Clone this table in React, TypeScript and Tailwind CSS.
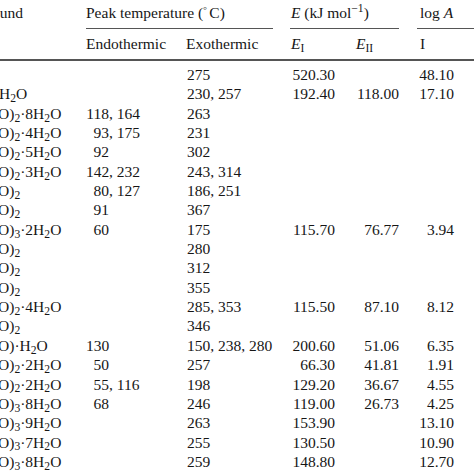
import React from 'react';

type Row = {
  compound: string;
  endo?: string;
  exo: string;
  e1?: string;
  e2?: string;
  logA?: string;
};

const ROWS: Row[] = [
  { compound: '', exo: '275', e1: '520.30', logA: '48.10' },
  { compound: 'H2O', exo: '230, 257', e1: '192.40', e2: '118.00', logA: '17.10' },
  { compound: 'O)2·8H2O', endo: '118, 164', exo: '263' },
  { compound: 'O)2·4H2O', endo: '93, 175', exo: '231' },
  { compound: 'O)2·5H2O', endo: '92', exo: '302' },
  { compound: 'O)2·3H2O', endo: '142, 232', exo: '243, 314' },
  { compound: 'O)2', endo: '80, 127', exo: '186, 251' },
  { compound: 'O)2', endo: '91', exo: '367' },
  { compound: 'O)3·2H2O', endo: '60', exo: '175', e1: '115.70', e2: '76.77', logA: '3.94' },
  { compound: 'O)2', exo: '280' },
  { compound: 'O)2', exo: '312' },
  { compound: 'O)2', exo: '355' },
  { compound: 'O)2·4H2O', exo: '285, 353', e1: '115.50', e2: '87.10', logA: '8.12' },
  { compound: 'O)2', exo: '346' },
  { compound: 'O)·H2O', endo: '130', exo: '150, 238, 280', e1: '200.60', e2: '51.06', logA: '6.35' },
  { compound: 'O)2·2H2O', endo: '50', exo: '257', e1: '66.30', e2: '41.81', logA: '1.91' },
  { compound: 'O)2·2H2O', endo: '55, 116', exo: '198', e1: '129.20', e2: '36.67', logA: '4.55' },
  { compound: 'O)3·8H2O', endo: '68', exo: '246', e1: '119.00', e2: '26.73', logA: '4.25' },
  { compound: 'O)3·9H2O', exo: '263', e1: '153.90', logA: '13.10' },
  { compound: 'O)3·7H2O', exo: '255', e1: '130.50', logA: '10.90' },
  { compound: 'O)3·8H2O', exo: '259', e1: '148.80', logA: '12.70' },
];

// digits after a letter or ")" are subscripts, the rest stay on the line
function Formula({ text }: { text: string }) {
  const parts: React.ReactNode[] = [];
  text.split('').forEach((ch, i) => {
    const prev = text[i - 1];
    if (/\d/.test(ch) && prev && /[A-Za-z)]/.test(prev)) {
      parts.push(<sub key={i}>{ch}</sub>);
    } else {
      parts.push(<span key={i}>{ch}</span>);
    }
  });
  return <>{parts}</>;
}

function Endo({ value }: { value?: string }) {
  if (!value) return null;
  const idx = value.indexOf(',');
  const first = idx === -1 ? value : value.slice(0, idx);
  const rest = idx === -1 ? '' : value.slice(idx);
  return (
    <span className="flex whitespace-pre">
      <span className="w-[23px] text-right">{first}</span>
      <span>{rest}</span>
    </span>
  );
}

const grid = 'grid grid-cols-[86px_100px_104px_45px_64px_55px_1fr]';

export default function App() {
  return (
    <div className="h-[474px] w-[474px] overflow-hidden bg-white font-['Liberation_Serif','Times_New_Roman',serif] text-[15.5px] text-[#161616]">
      <div className={`${grid} h-[28px] pt-[3px] leading-[19px]`}>
        <div className="overflow-hidden whitespace-nowrap">
          <span className="-ml-[8px]">ound</span>
        </div>
        <div className="col-span-2 whitespace-nowrap">
          Peak temperature (<sup className="mr-[2px] text-[12px]">◦</sup>C)
        </div>
        <div className="col-span-2 whitespace-nowrap pl-px">
          <i>E</i> (kJ mol<sup>−1</sup>)
        </div>
        <div className="col-span-2 whitespace-nowrap pl-[21px]">
          log <i>A</i>
        </div>
      </div>

      <div className={`${grid} h-px`}>
        <div />
        <div className="col-span-2 mr-[17px] bg-[#555]" />
        <div className="col-span-2 bg-[#555]" />
        <div className="col-span-2 ml-[18px] bg-[#555]" />
      </div>

      <div className={`${grid} h-[30px] pt-[5px] leading-[19px]`}>
        <div />
        <div>Endothermic</div>
        <div>Exothermic</div>
        <div className="pl-px">
          <i>E</i>
          <sub>I</sub>
        </div>
        <div className="pl-[21px]">
          <i>E</i>
          <sub>II</sub>
        </div>
        <div className="pl-[21px]">I</div>
        <div />
      </div>

      <div className="h-[2px] bg-[#555]" />

      <div className="pt-[4px]">
        {ROWS.map((r, i) => (
          <div key={i} className={`${grid} h-[19.35px] leading-[19.35px]`}>
            <div className="overflow-hidden whitespace-nowrap">
              <span className={r.compound.startsWith('H') ? '-ml-[1px]' : '-ml-[2px]'}>
                <Formula text={r.compound} />
              </span>
            </div>
            <div>
              <Endo value={r.endo} />
            </div>
            <div className="whitespace-nowrap pl-px">{r.exo}</div>
            <div className="text-right">{r.e1}</div>
            <div className="text-right">{r.e2}</div>
            <div className="text-right">{r.logA}</div>
            <div />
          </div>
        ))}
      </div>
    </div>
  );
}
